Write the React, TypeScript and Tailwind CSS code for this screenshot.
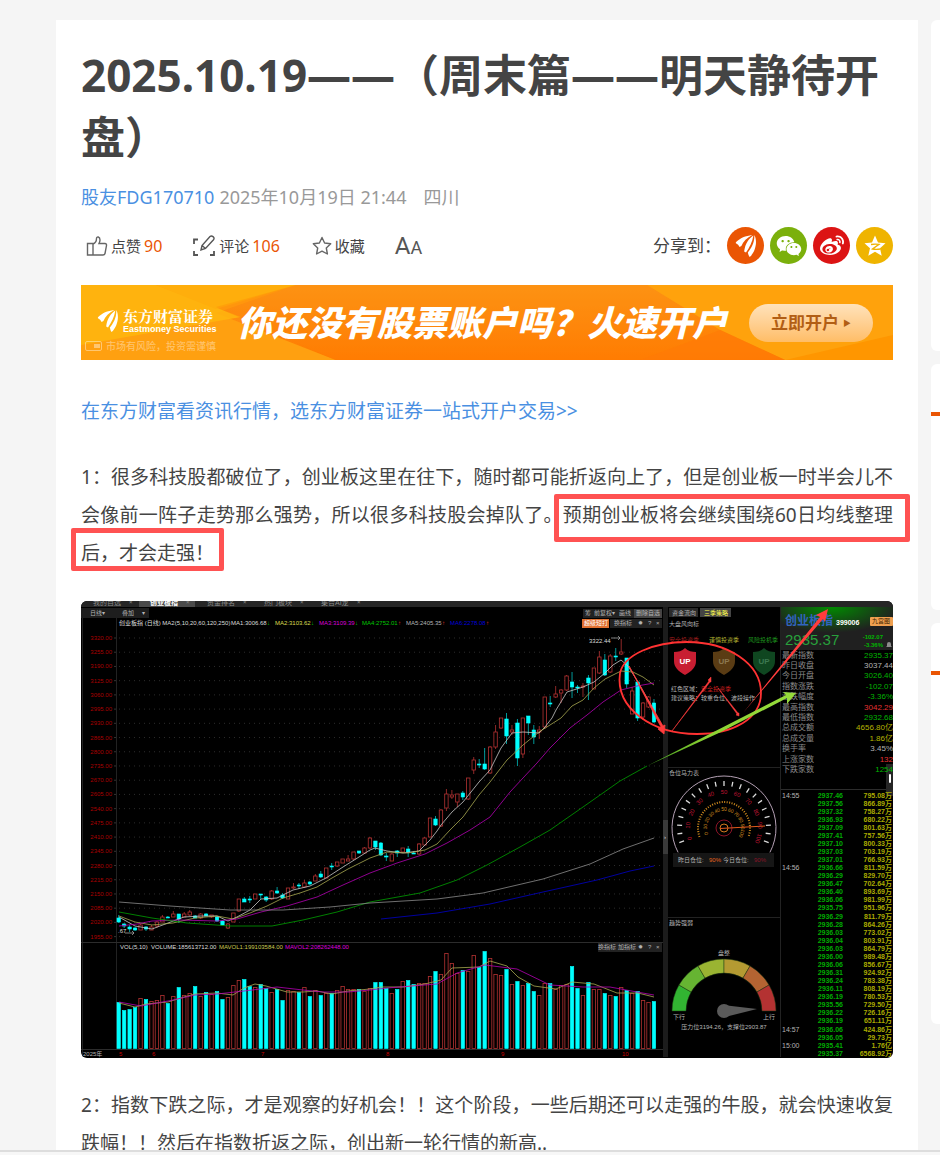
import {ReactNode} from "react";
import {AiFillWechat} from "react-icons/ai";
import {FaWeibo} from "react-icons/fa";

type Point = [number, number];
type Candle = [up: 0 | 1, top: number, bottom: number, high: number, low: number];

const STEP = 5.462;
const FIRST_X = 37.7;

const candles: Candle[] = [
  [0, 317, 321, 314, 322], [0, 323, 325, 322, 327], [0, 326, 328, 324, 331], [0, 327, 329, 326, 330],
  [1, 324, 329, 323, 329], [0, 326, 328, 325, 330], [1, 326, 329, 324, 329], [1, 321, 325, 320, 327],
  [1, 316, 321, 314, 321], [0, 316, 317, 315, 317], [1, 313, 316, 310, 316], [0, 313, 318, 313, 322],
  [1, 313, 316, 311, 316], [1, 311, 314, 309, 315], [0, 315, 317, 314, 317], [1, 313, 317, 312, 318],
  [0, 313, 315, 312, 315], [1, 314, 316, 314, 317], [0, 316, 320, 315, 321], [0, 320, 324, 319, 324],
  [1, 323, 327, 322, 328], [1, 312, 321, 312, 321], [1, 298, 310, 298, 311], [0, 298, 301, 296, 301],
  [0, 298, 299, 295, 302], [1, 293, 298, 293, 298], [0, 293, 294, 293, 298], [0, 296, 299, 295, 301],
  [1, 290, 298, 289, 299], [0, 290, 292, 286, 293], [0, 294, 297, 292, 298], [1, 287, 298, 287, 298],
  [1, 286, 287, 282, 288], [0, 284, 285, 282, 288], [1, 282, 286, 279, 287], [0, 281, 283, 280, 284],
  [1, 275, 280, 273, 280], [0, 273, 276, 270, 277], [1, 267, 277, 267, 277], [0, 265, 266, 262, 269],
  [1, 261, 265, 261, 266], [1, 258, 262, 258, 262], [1, 258, 260, 254, 260], [1, 251, 258, 251, 259],
  [0, 250, 252, 250, 253], [1, 247, 252, 246, 252], [1, 237, 247, 236, 248], [0, 240, 246, 240, 249],
  [0, 242, 254, 241, 255], [0, 255, 256, 252, 260], [1, 253, 260, 252, 260], [0, 250, 252, 249, 256],
  [1, 247, 251, 247, 252], [0, 248, 251, 245, 256], [0, 252, 253, 250, 253], [1, 243, 253, 242, 254],
  [1, 237, 244, 236, 244], [1, 217, 236, 217, 236], [0, 218, 224, 215, 225], [1, 209, 225, 208, 226],
  [1, 193, 207, 188, 210], [1, 194, 196, 189, 198], [1, 193, 201, 193, 206], [0, 192, 196, 190, 199],
  [1, 177, 198, 177, 199], [1, 159, 169, 156, 173], [0, 163, 164, 158, 167], [0, 163, 168, 147, 169],
  [1, 146, 172, 145, 173], [1, 131, 146, 124, 148], [1, 117, 127, 117, 128], [0, 118, 135, 112, 143],
  [1, 129, 131, 124, 134], [0, 122, 157, 118, 165], [1, 117, 153, 117, 157], [0, 115, 122, 115, 134],
  [0, 129, 136, 124, 143], [1, 129, 131, 125, 138], [1, 96, 126, 96, 128], [0, 102, 103, 95, 106],
  [1, 93, 96, 85, 97], [1, 89, 92, 88, 102], [1, 75, 89, 74, 90], [0, 81, 86, 71, 97],
  [0, 86, 87, 84, 92], [1, 85, 86, 82, 96], [0, 77, 82, 74, 99], [1, 67, 88, 67, 88],
  [1, 56, 72, 50, 73], [0, 59, 74, 53, 75], [1, 55, 71, 53, 72], [0, 55, 56, 47, 60],
  [1, 51, 53, 38, 54], [0, 57, 83, 57, 87], [1, 90, 113, 86, 113], [0, 81, 117, 81, 120],
  [1, 102, 116, 101, 119], [1, 96, 106, 95, 107], [0, 102, 121, 98, 122],
];

const volumes = [
  46, 38, 39, 41, 50, 49, 47, 48, 53, 45, 52, 61, 53, 55, 62, 52, 56, 54, 57, 49,
  51, 63, 68, 69, 62, 61, 64, 60, 56, 59, 48, 58, 57, 56, 61, 52, 58, 53, 55, 55,
  58, 62, 59, 59, 59, 57, 60, 66, 66, 60, 55, 59, 67, 68, 64, 65, 65, 72, 77, 74,
  95, 85, 75, 78, 77, 93, 81, 97, 90, 74, 73, 79, 64, 67, 63, 65, 57, 53, 65, 65,
  59, 63, 64, 82, 60, 53, 66, 59, 59, 55, 53, 52, 61, 58, 55, 57, 48, 46, 47,
];

const priceAverages: {color: string; points: string}[] = [
  {
    color: "#c8c8c8",
    points:
      "38,316 54,325 71,328 87,322 103,316 120,315 136,315 147,320 156,316 169,309 180,298 196,297 212,289 229,285 245,277 262,266 278,256 289,249 294,247 306,250 322,252 338,250 349,239 356,230 360,224 371,211 382,201 398,181 409,169 420,147 431,132 442,131 458,132 464,126 471,117 475,109 486,91 502,86 513,81 524,72 532,64 540,59 547,65 557,81 567,99 573,109",
  },
  {
    color: "#a8a850",
    points:
      "38,315 54,321 71,324 92,322 114,317 136,315 152,318 169,312 186,305 202,297 219,292 236,286 251,277 267,268 289,257 306,251 327,252 344,249 356,243 369,229 371,227 382,216 398,194 409,181 426,159 442,144 458,131 469,124 480,117 491,105 502,99 513,87 524,78 540,70 552,71 562,76 573,84",
  },
  {
    color: "#b400b4",
    points:
      "38,325 56,323 71,320 98,319 136,320 156,318 180,311 206,305 236,296 262,284 289,272 316,262 344,253 366,242 389,229 409,216 429,191 442,177 456,162 469,147 489,127 506,114 522,101 540,89 556,85 573,82",
  },
  {
    color: "#00a000",
    points:
      "38,311 71,317 106,322 149,325 191,325 222,319 256,311 289,301 339,292 376,279 406,264 439,246 469,229 502,206 539,180 566,165",
  },
  {
    color: "#8c8c8c",
    points:
      "38,301 89,305 149,309 202,309 249,306 289,302 356,298 402,292 462,278 509,263 542,248 573,237",
  },
  {
    color: "#0000c8",
    points: "300,318 356,312 409,303 462,291 516,279 549,270 573,265",
  },
];

const volumeAverages: {color: string; points: string}[] = [
  {
    color: "#a8a850",
    points:
      "38,402 54,406 65,403 87,401 103,396 114,393 136,392 152,394 163,387 174,383 185,385 206,391 222,391 236,390 251,393 267,390 289,388 300,386 322,386 344,383 360,379 371,367 398,366 409,360 426,365 437,376 453,385 475,388 491,381 513,383 536,392 557,392 573,396",
  },
  {
    color: "#b400b4",
    points:
      "38,401 60,405 92,399 114,394 136,393 163,390 196,386 222,389 242,391 267,391 289,389 306,387 356,383 376,372 404,364 436,368 469,384 502,386 529,386 556,391 573,394",
  },
];

const windowTabs = [
  {x: 12, name: "我的自选"},
  {x: 69, name: "创业板指", active: true},
  {x: 126, name: "资金排名"},
  {x: 183, name: "热门板块"},
  {x: 240, name: "集合AI龙"},
];

const quotes: {label: string; value: string; color: string}[] = [
  {label: "最新指数", value: "2935.37", color: "#00b400"},
  {label: "昨日收盘", value: "3037.44", color: "#b4b4b4"},
  {label: "今日开盘", value: "3026.40", color: "#00b400"},
  {label: "指数涨跌", value: "-102.07", color: "#00b400"},
  {label: "涨跌幅度", value: "-3.36%", color: "#00b400"},
  {label: "最高指数", value: "3042.29", color: "#e63232"},
  {label: "最低指数", value: "2932.68", color: "#00b400"},
  {label: "总成交额", value: "4656.80亿", color: "#b4b400"},
  {label: "总成交量", value: "1.86亿", color: "#b4b400"},
  {label: "换手率", value: "3.45%", color: "#b4b4b4"},
  {label: "上涨家数", value: "132", color: "#e63232"},
  {label: "下跌家数", value: "1254", color: "#00b400"},
];

const trades: [time: string, price: string, amount: string][] = [
  ["14:55", "2937.46", "795.08万"], ["", "2937.56", "866.89万"], ["", "2937.32", "758.27万"],
  ["", "2936.93", "680.22万"], ["", "2937.09", "801.63万"], ["", "2937.41", "757.56万"],
  ["", "2937.10", "800.33万"], ["", "2937.03", "703.19万"], ["", "2937.01", "766.93万"],
  ["14:56", "2936.66", "811.59万"], ["", "2936.29", "829.70万"], ["", "2936.47", "702.64万"],
  ["", "2936.40", "893.69万"], ["", "2936.06", "981.99万"], ["", "2935.75", "951.96万"],
  ["", "2936.29", "811.79万"], ["", "2936.28", "864.26万"], ["", "2936.03", "773.02万"],
  ["", "2936.04", "803.91万"], ["", "2936.03", "864.79万"], ["", "2936.00", "989.48万"],
  ["", "2936.06", "856.67万"], ["", "2936.31", "924.92万"], ["", "2936.24", "783.38万"],
  ["", "2936.11", "808.19万"], ["", "2936.19", "780.53万"], ["", "2935.56", "729.50万"],
  ["", "2936.22", "726.16万"], ["", "2936.19", "651.11万"], ["14:57", "2936.06", "424.86万"],
  ["", "2936.05", "29.73万"], ["15:00", "2935.41", "1.76亿"], ["", "2935.37", "6568.92万"],
];

const trendColors = ["#32b432", "#66b432", "#9ab432", "#b49a32", "#b46432", "#b43232"];

function polar(cx: number, cy: number, r: number, deg: number): Point {
  const rad = (deg * Math.PI) / 180;
  return [cx + r * Math.cos(rad), cy - r * Math.sin(rad)];
}

function Label({
  x,
  y,
  size = 6,
  fill = "#b4b4b4",
  anchor = "start",
  bold = false,
  children,
}: {
  x: number;
  y: number;
  size?: number;
  fill?: string;
  anchor?: "start" | "middle" | "end";
  bold?: boolean;
  children: ReactNode;
}) {
  return (
    <text
      x={x}
      y={y}
      fontSize={size}
      fill={fill}
      textAnchor={anchor}
      fontWeight={bold ? 700 : 400}
      dominantBaseline="central"
    >
      {children}
    </text>
  );
}

function ChartPane() {
  return (
    <g>
      {/* 标签页和工具栏 */}
      <rect width="812" height="6" fill="#262626" />
      <rect x="58" width="56" height="6" fill="#4a4a4a" />
      {windowTabs.map((tab) => (
        <g key={tab.name}>
          <Label x={tab.x} y={1} size={7} fill={tab.active ? "#ffffff" : "#8c8c8c"} bold={tab.active}>
            {tab.name}
          </Label>
          <Label x={tab.x + 36} y={1} fill="#8c8c8c">×</Label>
        </g>
      ))}
      <rect x="0" y="7" width="68" height="10" fill="#1e1e1e" />
      <Label x={9} y={12}>日线▾</Label>
      <Label x={41} y={12}>叠加</Label>
      <Label x={61} y={12}>▾</Label>

      <Label x={38} y={22} fill="#dcdcdc">创业板指 (日线) MA2(5,10,20,60,120,250)</Label>
      <Label x={150} y={22} fill="#dcdcdc">MA1:3006.68</Label>
      <Label x={194} y={22} fill="#dcdc50">MA2:3103.62</Label>
      <Label x={238} y={22} fill="#dc00dc">MA3:3109.39</Label>
      <Label x={281} y={22} fill="#00c800">MA4:2752.01</Label>
      <Label x={325} y={22} fill="#b4b4b4">MA5:2405.35</Label>
      <Label x={369} y={22} fill="#0000dc">MA6:2278.08</Label>
      {[186, 230, 274].map((x) => (
        <Label key={x} x={x} y={22} fill="#00c800">↓</Label>
      ))}
      {[317, 361, 405].map((x) => (
        <Label key={x} x={x} y={22} fill="#e63232">↑</Label>
      ))}

      <rect x="502" y="8" width="79" height="9" fill="#222222" />
      <Label x={504} y={12}>筹</Label>
      <Label x={513} y={12}>前复权▾</Label>
      <Label x={538} y={12}>画线</Label>
      <rect x="553" y="8" width="28" height="9" fill="#444444" />
      <Label x={555} y={12}>删除自选</Label>
      <rect x="501" y="18" width="27" height="9" fill="#e07030" />
      <Label x={503} y={22} fill="#ffffff">超级短打</Label>
      <rect x="529" y="18" width="52" height="9" fill="#222222" />
      <Label x={533} y={22}>换指标</Label>
      <Label x={557} y={22}>✹</Label>
      <Label x={567} y={22}>?</Label>
      <Label x={575} y={22}>×</Label>

      {/* 价格坐标 */}
      {Array.from({length: 22}, (_, i) => {
        const y = 37 + i * 14.22;
        return (
          <g key={i}>
            <Label x={31} y={y} fill="#aa0000" anchor="end">{(3320 - i * 65).toFixed(2)}</Label>
            <path d={`M33 ${y}h3`} stroke="#333333" />
            <path d={`M38 ${y}H580`} stroke="#2c2c2c" strokeDasharray="1 4" />
          </g>
        );
      })}
      <path d="M1.5 17V456M35.5 17V448" stroke="#222222" />
      <path d="M0 341.5H582M0 448.5H582" stroke="#2c2c2c" />

      {candles.map(([up, top, bottom, high, low], i) => {
        const x = FIRST_X + i * STEP;
        const color = up ? "#b43232" : "#00ffff";
        const body = up ? "#000000" : "#00ffff";
        return (
          <g key={i} stroke={color} strokeWidth={up ? 0.8 : 0.6}>
            <path d={`M${x} ${high}V${low}`} />
            <rect x={x - 1.7} y={top} width="3.4" height={Math.max(bottom - top, 1)} fill={body} />
            <rect x={x - 1.7} y={447.5 - volumes[i]} width="3.4" height={volumes[i]} fill={body} />
          </g>
        );
      })}
      {[...priceAverages, ...volumeAverages].map((line, i) => (
        <polyline key={i} points={line.points} fill="none" stroke={line.color} strokeWidth="0.8" />
      ))}

      <Label x={508} y={40} size={6} fill="#dcdcdc">3322.44</Label>
      <path d="M530 37h9l-2 -2m2 2l-2 2" stroke="#b4b4b4" fill="none" strokeWidth="0.7" />
      <Label x={37} y={330} fill="#dcdcdc">.67</Label>
      <path d="M44 332h9l-2 -2m2 2l-2 2" stroke="#b4b4b4" fill="none" strokeWidth="0.7" />

      {/* 成交量 */}
      <Label x={39} y={346} fill="#dcdcdc">VOL(5,10)</Label>
      <Label x={70} y={346} fill="#dcdcdc">VOLUME:185613712.00</Label>
      <Label x={138} y={346} fill="#c8c850">MAVOL1:199103584.00</Label>
      <Label x={204} y={346} fill="#dc00dc">MAVOL2:208262448.00</Label>
      <rect x="517" y="342" width="64" height="9" fill="#222222" />
      <Label x={517} y={346}>换指标</Label>
      <Label x={537} y={346}>加指标</Label>
      <Label x={557} y={346}>✹</Label>
      <Label x={567} y={346}>?</Label>
      <Label x={575} y={346}>×</Label>

      <Label x={2} y={453}>2025年</Label>
      <Label x={38} y={453} fill="#c80000">5</Label>
      <Label x={71} y={453} fill="#c80000">6</Label>
      <Label x={180} y={453} fill="#c80000">7</Label>
      <Label x={305} y={453} fill="#c80000">8</Label>
      <Label x={420} y={453} fill="#c80000">9</Label>
      <Label x={541} y={453} fill="#c80000">10</Label>
    </g>
  );
}

function Shield({x, fill, text}: {x: number; fill: string; text: string}) {
  return (
    <g>
      <path
        d={`M${x} 47c3 3 7 4 11 4v9c0 6 -4 10 -11 14c-7 -4 -11 -8 -11 -14v-9c4 0 8 -1 11 -4z`}
        fill={fill}
      />
      <Label x={x} y={60} size={8} fill={text} anchor="middle" bold>UP</Label>
    </g>
  );
}

function GaugePane() {
  const [cx, cy] = [643, 227];
  const arcStart = polar(cx, cy, 52, 208);
  const arcEnd = polar(cx, cy, 52, -28);

  return (
    <g>
      <rect x="582" y="6" width="5" height="450" fill="#1c1c1c" />
      <rect x="582" y="219" width="5" height="34" fill="#3a3a3a" />
      <Label x={583} y={236} fill="#dcdcdc">›</Label>
      <rect x="588" y="7" width="29" height="9" fill="#2a2a2a" />
      <Label x={591} y={12}>资金流向</Label>
      <rect x="619" y="7" width="31" height="9" fill="#444444" />
      <Label x={623} y={12} fill="#ffff50">三季策略</Label>
      <Label x={588} y={23}>大盘风向标</Label>
      <Label x={588} y={39} fill="#a01e1e">安全投资季</Label>
      <Label x={628} y={39} fill="#b4b432">谨慎投资季</Label>
      <Label x={667} y={39} fill="#1e961e">风险投机季</Label>
      <Shield x={604} fill="#c81e32" text="#ffffff" />
      <Shield x={643} fill="#5a3c14" text="#8c7850" />
      <Shield x={683} fill="#0f4620" text="#3c7850" />
      <Label x={590} y={88}>红色区域：</Label>
      <Label x={620} y={88} fill="#c81e1e">安全投资季</Label>
      <Label x={590} y={97}>建议策略：较重仓位，波段操作</Label>

      <path d="M587 166.5H699M587 316.5H699M699.5 6V456" stroke="#222222" />
      <Label x={588} y={172}>仓位马力表</Label>
      <path
        d={`M${arcStart.join(" ")}A52 52 0 1 1 ${arcEnd.join(" ")}`}
        fill="none"
        stroke="#b4a0b4"
      />
      {Array.from({length: 21}, (_, i) => {
        const deg = 198 - i * 10.8;
        const [x1, y1] = polar(cx, cy, 42, deg);
        const [x2, y2] = polar(cx, cy, 47, deg);
        return <path key={i} d={`M${x1} ${y1}L${x2} ${y2}`} stroke="#dcdcdc" strokeWidth="1.3" />;
      })}
      <path
        d={`M${polar(cx, cy, 26, 200).join(" ")}A26 26 0 1 1 ${polar(cx, cy, 26, -20).join(" ")}`}
        fill="none"
        stroke="#d28c1e"
        strokeWidth="2"
        strokeDasharray="1 1.5"
      />
      {Array.from({length: 11}, (_, i) => {
        const deg = 197 - i * 21.4;
        const [x, y] = polar(cx, cy, 36, deg);
        const [ix, iy] = polar(cx, cy, 19, deg);
        return (
          <g key={i}>
            <g transform={`rotate(${90 - deg} ${x} ${y})`}>
              <Label x={x} y={y} size={6} fill="#be1432" anchor="middle">{i * 10}</Label>
            </g>
            <g transform={`rotate(${90 - deg} ${ix} ${iy})`}>
              <Label x={ix} y={iy} size={5} fill="#d28c1e" anchor="middle">{i * 10}</Label>
            </g>
          </g>
        );
      })}
      <circle cx={cx} cy={cy} r="8" fill="none" stroke="#8c1428" />
      <circle cx={cx} cy={cy} r="4" fill="none" stroke="#d2781e" />
      <path d="M639 227.5L684 225" stroke="#e05a1e" />
      <rect x="592" y="252" width="101" height="14" fill="#161616" />
      <Label x={597} y={259}>昨日仓位:</Label>
      <Label x={628} y={259} fill="#e6641e">90%</Label>
      <Label x={642} y={259}>今日仓位:</Label>
      <Label x={673} y={259} fill="#8c1428">90%</Label>

      <Label x={588} y={322}>趋势强弱</Label>
      <Label x={643} y={352} anchor="middle">盘整</Label>
      {trendColors.map((color, i) => {
        const from = 180 - i * 30;
        const a = polar(643, 410, 52, from);
        const b = polar(643, 410, 52, from - 30);
        const c = polar(643, 410, 38, from - 30);
        const d = polar(643, 410, 38, from);
        return (
          <path
            key={color}
            d={`M${a.join(" ")}A52 52 0 0 1 ${b.join(" ")}L${c.join(" ")}A38 38 0 0 0 ${d.join(" ")}z`}
            fill={color}
            stroke="#1e3c14"
            strokeWidth="0.5"
          />
        );
      })}
      <path d="M642 404L676 408L644 416z" fill="#5a5a5a" />
      <circle cx="643" cy="410" r="7" fill="#5a5a5a" />
      <Label x={592} y={416}>下行</Label>
      <Label x={694} y={416} anchor="end">上行</Label>
      <Label x={643} y={426} anchor="middle">压力位3194.26，支撑位2903.87</Label>
    </g>
  );
}

function QuotePane() {
  return (
    <g>
      <rect x="700" y="6" width="112" height="43" fill="#202020" />
      <rect x="700" y="6" width="112" height="43" fill="url(#glow)" />
      <Label x={704} y={20} size={12} fill="#3264be" bold>创业板指</Label>
      <Label x={755} y={21} size={7} fill="#ffffff" bold>399006</Label>
      <rect x="789" y="16" width="23" height="9" rx="1" fill="#f0a050" />
      <Label x={800} y={20} fill="#3c1e00" anchor="middle">九宫图</Label>
      <Label x={704} y={38} size={15} fill="#28a03c">2935.37</Label>
      <Label x={802} y={36} size={6} fill="#00b400" anchor="end" bold>-102.07</Label>
      <Label x={802} y={44} size={6} fill="#00b400" anchor="end" bold>-3.36%</Label>
      <path d="M805 46h6l-1 -1v-2a2 2 0 0 0 -4 0v2z" fill="#8c8c8c" />

      <path d="M700 188.5H812" stroke="#2c2c2c" />
      <rect x="805" y="163" width="7" height="32" fill="#262626" />
      {quotes.map((row, i) => (
        <g key={row.label}>
          <Label x={701} y={54 + i * 10.4} size={8} fill="#8c8c8c">{row.label}</Label>
          <Label x={812} y={54 + i * 10.4} size={8} fill={row.color} anchor="end">{row.value}</Label>
        </g>
      ))}
      <rect x="808" y="173" width="2" height="9" rx="1" fill="#ffffff" />

      {trades.map(([time, price, amount], i) => {
        const y = 194 + i * 8.07;
        return (
          <g key={i}>
            {time && <Label x={701} y={y} size={7}>{time}</Label>}
            <Label x={762} y={y} size={7} fill="#00aa00" anchor="end" bold>{price}</Label>
            <Label x={811} y={y} size={7} fill="#aaaa00" anchor="end" bold>{amount}</Label>
          </g>
        );
      })}
    </g>
  );
}

function MarketSnapshot() {
  return (
    <svg
      viewBox="0 0 812 457"
      role="img"
      aria-label="创业板指日线"
      className="block w-full rounded-md bg-black font-['Liberation_Sans','Noto_Sans_CJK_SC',sans-serif]"
    >
      <defs>
        <radialGradient id="glow" cx="0.45" cy="0" r="0.6">
          <stop offset="0" stopColor="#008c00" />
          <stop offset="1" stopColor="#008c00" stopOpacity="0" />
        </radialGradient>
        <linearGradient id="arrow" gradientUnits="userSpaceOnUse" x1="566" y1="165" x2="714" y2="92">
          <stop offset="0" stopColor="#3c961e" />
          <stop offset="0.4" stopColor="#8cd232" />
          <stop offset="1" stopColor="#96dc3c" />
        </linearGradient>
      </defs>
      <ChartPane />
      <GaugePane />
      <QuotePane />

      <path
        d="M539 72C543 54 572 41 606 41C646 41 680 62 680 92C680 118 652 133 616 133C572 133 534 108 539 72z"
        fill="none"
        stroke="#ff3232"
        strokeWidth="1.8"
      />
      <path d="M548 65L580 126L577 128L583 133L584 124L582 125z" fill="#ff3c3c" stroke="#ff3c3c" strokeWidth="0.8" />
      <path d="M591 130L628 80L627 79L630 76L630 81L629 81z" fill="#ff3c3c" stroke="#ff3c3c" strokeWidth="0.5" />
      <path d="M637 87L656 113L655 114L658 115L658 112L657 112z" fill="#ff3c3c" stroke="#ff3c3c" strokeWidth="0.5" />
      <path d="M662 112L739 16L735 14L747 8L744 21L742 18z" fill="#ff3c3c" />
      <path d="M566 165L705 94L702 91L715 92L706 103L706 97L640 131z" fill="url(#arrow)" />
    </svg>
  );
}

// 翅膀标志，横幅和分享按钮共用
function WingMark({className}: {className?: string}) {
  return (
    <svg viewBox="0 0 24 26" className={className} fill="currentColor" aria-hidden="true">
      <path d="M1 9C6 4 11 2 19 1C13 4 9 8 7 13L5 14C4 12 3 11 1 10z" />
      <path d="M20 1.500C15 5 11 10 10 19L12 20C16 14 19 8 20 1.500z" />
      <path d="M21 1C21.500 9 18 15 14 20C14.500 22 15 24 16 25C22 20 25 8 21 1z" />
    </svg>
  );
}

function ThumbIcon() {
  return (
    <svg viewBox="0 0 22 22" className="size-[22px]" fill="none" stroke="#666666" strokeWidth="1.4" aria-hidden="true">
      <path d="M1.5 8.5H7V20H1.5zM7 9C9.5 8 10.500 6 10.500 3.5C10.500 1 14 1.500 14 5C14 6.500 13.5 7.500 13 8.500H19C20 8.500 20.700 9.300 20.500 10.500L19 18.500C18.800 19.500 18 20 17 20H7" />
    </svg>
  );
}

function CommentIcon() {
  return (
    <svg viewBox="0 0 24 22" className="h-[22px] w-6" fill="none" stroke="#555555" strokeWidth="1.4" aria-hidden="true">
      <path d="M6 4.500H2V9M2 16V20H6M18 20H22V16" strokeWidth="1.8" />
      <path d="M9 15L10 10.500L18 1.500C19 .7 20 .8 21 1.600C22.300 2.600 22.300 3.700 21.500 4.700L13.500 13.500L9 15zM10 10.500L13.500 13.500" />
    </svg>
  );
}

function StarIcon() {
  return (
    <svg viewBox="0 0 20 20" className="size-5" fill="none" stroke="#666666" strokeWidth="1.4" strokeLinejoin="round" aria-hidden="true">
      <path d="M10 1.500L12.600 7L18.700 7.800L14.300 12L15.400 18L10 15.200L4.600 18L5.700 12L1.300 7.800L7.400 7z" />
    </svg>
  );
}

function ZoneIcon() {
  return (
    <svg viewBox="0 0 24 24" className="size-6" aria-hidden="true">
      <path
        d="M12 1.500L15 8.500L22.500 9.200L17 14.300L18.700 21.700L12 17.800L5.300 21.700L7 14.300L1.500 9.200L9 8.500z"
        fill="#ffffff"
      />
      <path d="M8 10.500C11 10 13 10 16 10.400L9.500 15C12 15.600 14 15.600 17.500 15" fill="none" stroke="#efb400" strokeWidth="1.3" />
    </svg>
  );
}

const shareLinks = [
  {name: "东方财富", color: "bg-[#ea5504]", icon: <WingMark className="size-6" />},
  {name: "微信", color: "bg-[#7bb00c]", icon: <AiFillWechat className="size-7" />},
  {name: "微博", color: "bg-[#dc1414]", icon: <FaWeibo className="size-6" />},
  {name: "QQ空间", color: "bg-[#efb400]", icon: <ZoneIcon />},
];

function ActionBar() {
  return (
    <div className="mt-4 flex items-center justify-between text-[15px] leading-6 text-[#444444]">
      <div className="flex items-center pl-[5px]">
        <button type="button" className="flex items-center gap-[3px]">
          <ThumbIcon />
          <span>点赞</span>
          <span className="text-base text-[#ea5504]">90</span>
        </button>
        <button type="button" className="ml-[30px] flex items-center gap-[3px]">
          <CommentIcon />
          <span>评论</span>
          <span className="text-base text-[#ea5504]">106</span>
        </button>
        <button type="button" className="ml-8 flex items-center gap-[3px]">
          <StarIcon />
          <span>收藏</span>
        </button>
        <button
          type="button"
          aria-label="字号"
          className="ml-[30px] flex items-baseline font-[Roboto] text-[#555555]"
        >
          <span className="text-2xl">A</span>
          <span className="text-lg">A</span>
        </button>
      </div>
      <div className="flex items-center gap-[6px]">
        <span className="text-[17px]">分享到：</span>
        {shareLinks.map((link) => (
          <a
            key={link.name}
            href="#"
            aria-label={link.name}
            className={`flex size-[37px] items-center justify-center rounded-full text-white ${link.color}`}
          >
            {link.icon}
          </a>
        ))}
      </div>
    </div>
  );
}

function Banner() {
  return (
    <a
      href="#"
      className="relative mt-[21px] flex h-[75px] items-center overflow-hidden bg-linear-to-b from-[#fc9a18] to-[#ff7a00] px-4 text-white"
    >
      <svg
        viewBox="0 0 813 75"
        preserveAspectRatio="none"
        className="absolute inset-0 size-full"
        aria-hidden="true"
      >
        <path d="M0 0H215L135 28L255 75H0z" fill="#ffa010" />
        <path d="M0 0H75L160 32L0 60z" fill="#ffb80e" opacity="0.8" />
        <path d="M75 0H215L135 24z" fill="#ffae0c" />
        <path d="M252 0H567L640 45L705 75H255L135 22L215 0z" fill="#ff8208" opacity="0.3" />
        <path d="M567 0H813V75H705L640 45z" fill="#ffa20c" />
        <path d="M640 45L705 75H560z" fill="#ff7a06" opacity="0.6" />
        <path d="M813 50V75H705z" fill="#ff9600" />
      </svg>
      <div className="relative w-[130px] shrink-0">
        <div className="mt-4 flex items-center gap-1">
          <WingMark className="h-[26px] w-[22px]" />
          <div>
            <div className="font-['Noto_Serif_CJK_SC','Noto_Sans_CJK_SC',sans-serif] text-[15px] leading-4 font-bold whitespace-nowrap">
              东方财富证券
            </div>
            <div className="font-['Liberation_Sans',sans-serif] text-[9px] leading-[10px] font-bold whitespace-nowrap">
              Eastmoney Securities
            </div>
          </div>
        </div>
        <div className="mt-1 -ml-3 flex items-center gap-1 text-[10px] leading-4 whitespace-nowrap opacity-40">
          <span className="flex h-[10px] w-[17px] items-center justify-end rounded-xs border border-white pr-px">
            <span className="h-1 w-[6px] bg-white" />
          </span>
          市场有风险，投资需谨慎
        </div>
      </div>
      <div className="relative ml-[10px] flex-1 text-[35px] leading-none font-black whitespace-nowrap italic">
        你还没有股票账户吗？火速开户
      </div>
      <span className="relative mr-1 flex h-[38px] w-[124px] shrink-0 items-center justify-center gap-1 rounded-full bg-linear-to-b from-[#ffe2ba] to-[#ffbd66] text-[17px] font-bold text-[#b25e14]">
        立即开户
        <span className="text-[8px]">▶</span>
      </span>
    </a>
  );
}

function Article() {
  return (
    <article className="min-w-0 flex-1 bg-white px-[25px] pt-6 pb-10 text-[#444444]">
      <h1 className="text-[44px] leading-[62px] font-bold">
        2025.10.19——（周末篇——明天静待开盘）
      </h1>
      <div className="mt-[15px] flex gap-[5px] text-lg leading-7 text-[#999999]">
        <a href="#" className="text-[#4a90e2]">股友FDG170710</a>
        <span>2025年10月19日 21:44</span>
        <span className="ml-3">四川</span>
      </div>
      <ActionBar />
      <Banner />
      <p className="mt-8 text-[19px] leading-[38px]">
        <a href="#" className="text-[#4a90e2]">
          在东方财富看资讯行情，选东方财富证券一站式开户交易&gt;&gt;
        </a>
      </p>
      <div className="relative mt-7">
        <p className="text-justify text-[19px] leading-[38px]">
          1：很多科技股都破位了，创业板这里在往下，随时都可能折返向上了，但是创业板一时半会儿不会像前一阵子走势那么强势，所以很多科技股会掉队了。预期创业板将会继续围绕60日均线整理后，才会走强！
        </p>
        <span className="absolute top-[36px] -right-[17px] h-[48px] w-[356px] rounded-xs border-[5px] border-[#ff5252]" />
        <span className="absolute top-[70px] -left-[10px] h-[43px] w-[153px] rounded-xs border-[5px] border-[#ff5252]" />
      </div>
      <div className="mt-[29px]">
        <MarketSnapshot />
      </div>
      <p className="mt-7 text-justify text-[19px] leading-[38px]">
        2：指数下跌之际，才是观察的好机会！！这个阶段，一些后期还可以走强的牛股，就会快速收复跌幅！！然后在指数折返之际，创出新一轮行情的新高..
      </p>
    </article>
  );
}

export default function App() {
  return (
    <div
      lang="zh-CN"
      className="flex h-screen flex-col bg-[#f5f5f5] font-['Noto_Sans','Noto_Sans_CJK_SC',sans-serif] [text-spacing-trim:space-all]"
    >
      <main className="flex min-h-0 flex-1 gap-[13px] overflow-hidden pt-5 pl-14">
        <Article />
        <aside className="flex w-[9px] shrink-0 flex-col gap-[13px]">
          <div className="h-[331px] shrink-0 rounded-l-md bg-white" />
          <div className="h-[246px] shrink-0 rounded-l-md bg-white pt-12">
            <div className="h-1 bg-[#ea5504]" />
          </div>
          <div className="h-[401px] shrink-0 rounded-l-md bg-white pt-12">
            <div className="h-1 bg-[#ea5504]" />
          </div>
        </aside>
      </main>
      <div className="h-[5px] shrink-0 border-t-2 border-[#dddddd] bg-[#f7f7f7]" />
    </div>
  );
}
